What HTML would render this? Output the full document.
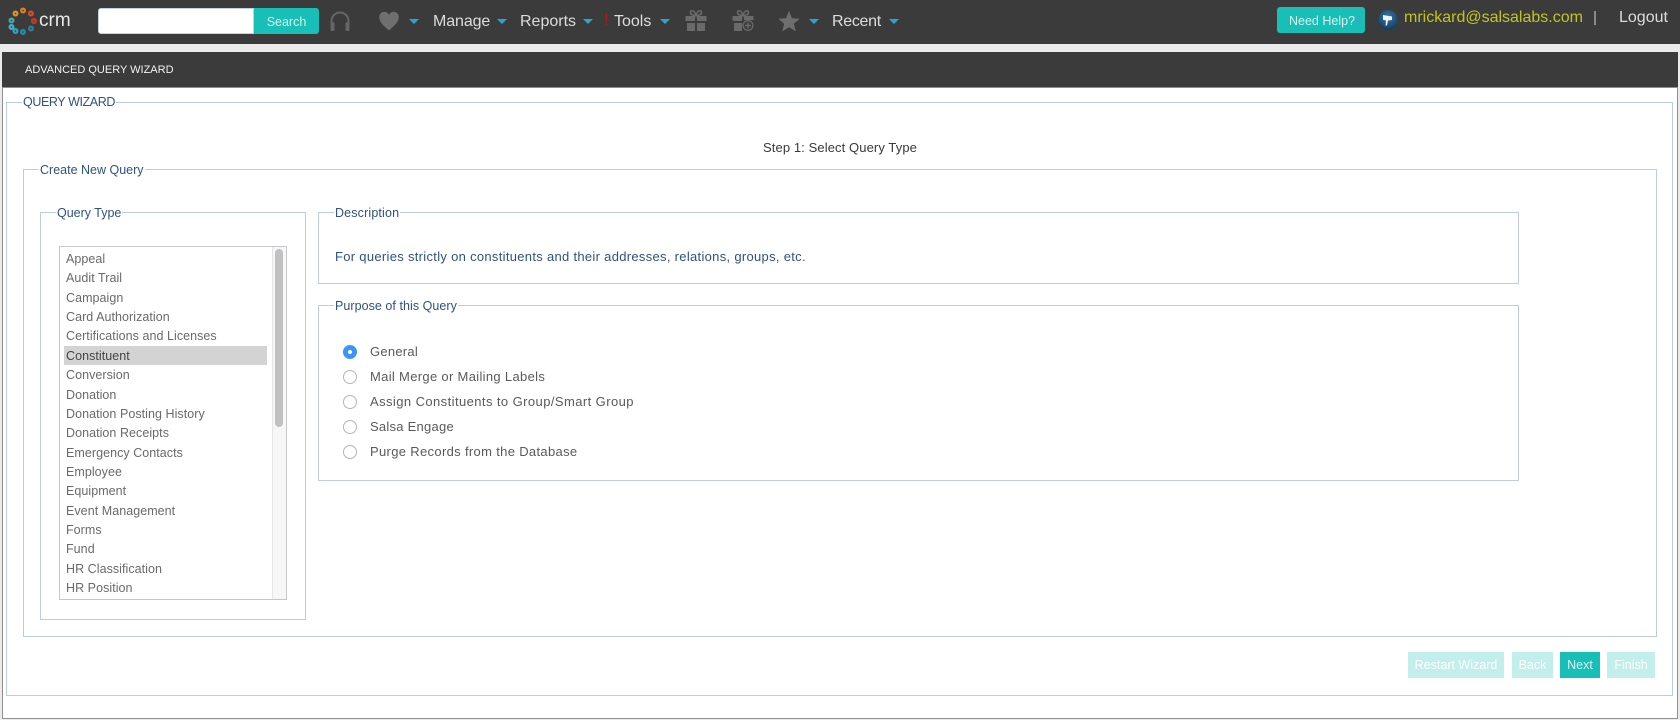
<!DOCTYPE html>
<html lang="en">
<head>
<meta charset="utf-8">
<title>Advanced Query Wizard</title>
<style>
html,body{margin:0;padding:0;width:1680px;height:720px;overflow:hidden;background:#ebebeb;font-family:"Liberation Sans",sans-serif}
.a{position:absolute;white-space:nowrap}
.t{position:absolute;white-space:nowrap;line-height:20px;height:20px}
.nav{color:#dcdcdc;font-size:16px}
.box{position:absolute;border:1px solid #bccde0;box-sizing:border-box}
.leg{color:#2f5283;font-size:12.5px;background:#fff;padding:0 1px}
.it{position:absolute;left:66px;color:#6a6a6a;font-size:12.5px;line-height:20px;white-space:nowrap;letter-spacing:.05px}
.lab{position:absolute;left:370px;color:#5a5a5a;font-size:13px;line-height:20px;white-space:nowrap;letter-spacing:.25px}
.rad{position:absolute;left:343px;width:12px;height:12px;border:1px solid #b5b5b5;border-radius:50%;background:#fff}
.car{position:absolute;top:19px;width:0;height:0;border-left:5px solid transparent;border-right:5px solid transparent;border-top:5px solid #2aa5cf}
.btn{position:absolute;top:652px;height:26px;line-height:26px;text-align:center;color:#fff;font-size:12.5px;background:#c2eeeb}
</style>
</head>
<body>
<div class="a" style="left:0;top:0;width:1680px;height:44px;background:#3b3b3b"></div>

<svg class="a" style="left:0;top:0" width="40" height="44" viewBox="0 0 40 44">
<g fill="none" stroke-width="2.200">
<circle cx="15.500" cy="13.500" r="1.900" stroke="#d9952a"/>
<circle cx="23" cy="10.500" r="1.900" stroke="#e0801c"/>
<circle cx="31" cy="13.500" r="1.900" stroke="#cf4f2c"/>
<circle cx="34" cy="21" r="1.900" stroke="#c73a2a"/>
<circle cx="31" cy="28.500" r="1.900" stroke="#2b7f9c"/>
<circle cx="23" cy="32" r="1.900" stroke="#1e8fb0"/>
<circle cx="15.500" cy="31" r="1.900" stroke="#2fa0c0"/>
<circle cx="11.500" cy="27" r="1.900" stroke="#42b0cc"/>
<circle cx="11.500" cy="20.500" r="1.900" stroke="#4aa8a8"/>
</g>
</svg>
<div class="t" style="left:39px;top:11px;color:#e8e8e8;font-size:19px;line-height:20px">crm</div>

<div class="a" style="left:98px;top:8px;width:156px;height:26px;background:#fff;border-radius:3px 0 0 3px;box-sizing:border-box;border:1px solid #c5d2e5"></div>
<div class="a" style="left:254px;top:8px;width:65px;height:26px;background:#17bfb7;border-radius:0 3px 3px 0;color:#d4f3f1;font-size:12.5px;line-height:28px;text-align:center">Search</div>

<svg class="a" style="left:328px;top:9px" width="24" height="24" viewBox="0 0 24 24">
<path d="M3.500 19v-7a8.500 8.500 0 0 1 17 0v7" fill="none" stroke="#666" stroke-width="2"/>
<rect x="2.500" y="13" width="4" height="9" rx="1.500" fill="#666"/>
<rect x="17.500" y="13" width="4" height="9" rx="1.500" fill="#666"/>
</svg>
<svg class="a" style="left:379px;top:11px" width="20" height="20" viewBox="0 0 20 20">
<path d="M10 19.500C7 16.500.2 12 .2 6.300.2 3 2.600.8 5.300.8 7.300.8 9 1.900 10 3.700 11 1.900 12.700.8 14.700.8c2.700 0 5.100 2.200 5.100 5.500C19.800 12 13 16.500 10 19.500z" fill="#6f6f6f"/>
</svg>
<div class="car" style="left:409px"></div>

<div class="t nav" style="left:433px;top:12px;letter-spacing:-.1px">Manage</div>
<div class="car" style="left:497px"></div>
<div class="t nav" style="left:520px;top:12px">Reports</div>
<div class="car" style="left:583px"></div>
<div class="t" style="left:604px;top:10px;color:#b01818;font-size:17px">!</div>
<div class="t nav" style="left:614px;top:12px">Tools</div>
<div class="car" style="left:660px"></div>

<svg class="a" style="left:685px;top:9px" width="22" height="24" viewBox="0 0 22 24">
<path d="M11 6.500C8 6.500 5 5.500 5.500 3 6 .8 9.500 1 11 6.500 12.500 1 16 .8 16.500 3 17 5.500 14 6.500 11 6.500z" fill="none" stroke="#6a6a6a" stroke-width="1.500"/>
<rect x="0.500" y="7" width="9.500" height="5" fill="#6a6a6a"/>
<rect x="12" y="7" width="9.500" height="5" fill="#6a6a6a"/>
<rect x="2" y="14" width="8" height="8" fill="#6a6a6a"/>
<rect x="12" y="14" width="8" height="8" fill="#6a6a6a"/>
</svg>
<svg class="a" style="left:732px;top:9px" width="24" height="24" viewBox="0 0 24 24">
<path d="M11 6.500C8 6.500 5 5.500 5.500 3 6 .8 9.500 1 11 6.500 12.500 1 16 .8 16.500 3 17 5.500 14 6.500 11 6.500z" fill="none" stroke="#6a6a6a" stroke-width="1.500"/>
<rect x="0.500" y="7" width="9.500" height="5" fill="#6a6a6a"/>
<rect x="12" y="7" width="9.500" height="4" fill="#6a6a6a"/>
<rect x="2" y="14" width="8" height="8" fill="#6a6a6a"/>
<circle cx="16" cy="16.500" r="5.500" fill="#6a6a6a"/>
<circle cx="16" cy="16.500" r="4.200" fill="#3b3b3b"/>
<path d="M16 13.500v6M13 16.500h6" stroke="#6a6a6a" stroke-width="1.400"/>
</svg>
<svg class="a" style="left:778px;top:10px" width="22" height="22" viewBox="0 0 22 22">
<path d="M11 .8l3 7.400 7.800.5-6 5 2 7.700L11 17.200 4.200 21.400l2-7.700-6-5 7.800-.5z" fill="#6e6e6e"/>
</svg>
<div class="car" style="left:809px"></div>
<div class="t nav" style="left:832px;top:12px;letter-spacing:-.3px">Recent</div>
<div class="car" style="left:889px"></div>

<div class="a" style="left:1277px;top:7px;width:88px;height:26px;background:#17bfb7;border-radius:3px;color:#d4f3f1;font-size:12.500px;line-height:28px;padding-left:12px;box-sizing:border-box">Need Help?</div>
<div class="car" style="left:1354px;top:18px;border-left-width:4px;border-right-width:4px;border-top-color:#3ba7c9"></div>
<svg class="a" style="left:1378px;top:10px" width="20" height="20" viewBox="0 0 20 20">
<defs><radialGradient id="g" cx="50%" cy="35%" r="65%"><stop offset="0" stop-color="#3a79a6"/><stop offset="1" stop-color="#143a5c"/></radialGradient></defs>
<circle cx="10" cy="10" r="10" fill="url(#g)"/>
<path d="M5 5l9 1.500V10l-4 .5-1 5H7.500l.5-5-3-.8z" fill="#eef2f5"/>
</svg>
<div class="t" style="left:1404px;top:8px;color:#c4c41c;font-size:16px">mrickard@salsalabs.com</div>
<div class="a" style="left:1594px;top:11px;width:2px;height:14px;background:#8a8a8a"></div>
<div class="t nav" style="left:1619px;top:8px">Logout</div>

<div class="a" style="left:2px;top:52px;width:1676px;height:667px;background:#fff;border:1px solid #8f8f8f;border-top:0;box-sizing:border-box"></div>
<div class="a" style="left:2px;top:52px;width:1676px;height:36px;background:#3b3b3b;border-bottom:1px solid #8f8f8f;box-sizing:border-box"></div>
<div class="t" style="left:25px;top:60px;color:#f2f2f2;font-size:11px">ADVANCED QUERY WIZARD</div>

<div class="box" style="left:6px;top:102px;width:1667px;height:594px"></div>
<div class="t leg" style="left:22px;top:92px;letter-spacing:-.4px">QUERY WIZARD</div>
<div class="t" style="left:763px;top:138px;color:#3a3a3a;font-size:13px;letter-spacing:.1px">Step 1: Select Query Type</div>

<div class="box" style="left:23px;top:169px;width:1634px;height:468px"></div>
<div class="t leg" style="left:39px;top:160px">Create New Query</div>

<div class="box" style="left:40px;top:212px;width:266px;height:408px"></div>
<div class="t leg" style="left:56px;top:203px">Query Type</div>

<div class="a" style="left:59px;top:246px;width:228px;height:354px;border:1px solid #c4c8cc;box-sizing:border-box;background:#fff"></div>
<div class="a" style="left:272px;top:247px;width:14px;height:352px;background:#f7f7f7;border-left:1px solid #e6e6e6;box-sizing:border-box"></div>
<div class="a" style="left:275px;top:249px;width:8px;height:178px;border-radius:4px;background:#c1c1c1"></div>
<div class="a" style="left:64px;top:346px;width:203px;height:19px;background:#d3d3d3"></div>

<div class="it" style="top:249px">Appeal</div>
<div class="it" style="top:268px">Audit Trail</div>
<div class="it" style="top:288px">Campaign</div>
<div class="it" style="top:307px">Card Authorization</div>
<div class="it" style="top:326px">Certifications and Licenses</div>
<div class="it" style="top:346px;color:#444">Constituent</div>
<div class="it" style="top:365px">Conversion</div>
<div class="it" style="top:385px">Donation</div>
<div class="it" style="top:404px">Donation Posting History</div>
<div class="it" style="top:423px">Donation Receipts</div>
<div class="it" style="top:443px">Emergency Contacts</div>
<div class="it" style="top:462px">Employee</div>
<div class="it" style="top:481px">Equipment</div>
<div class="it" style="top:501px">Event Management</div>
<div class="it" style="top:520px">Forms</div>
<div class="it" style="top:539px">Fund</div>
<div class="it" style="top:559px">HR Classification</div>
<div class="it" style="top:578px">HR Position</div>

<div class="box" style="left:318px;top:212px;width:1201px;height:72px"></div>
<div class="t leg" style="left:334px;top:203px;letter-spacing:.15px">Description</div>
<div class="t" style="left:335px;top:247px;color:#2f5283;font-size:13px;letter-spacing:.3px">For queries strictly on constituents and their addresses, relations, groups, etc.</div>

<div class="box" style="left:318px;top:305px;width:1201px;height:176px"></div>
<div class="t leg" style="left:334px;top:296px;letter-spacing:.05px">Purpose of this Query</div>

<div class="rad" style="top:345px;background:#3b95f5;border-color:#3b95f5"></div>
<div class="a" style="left:348px;top:350px;width:4px;height:4px;border-radius:50%;background:#fff"></div>
<div class="lab" style="top:342px">General</div>
<div class="rad" style="top:370px"></div>
<div class="lab" style="top:367px;letter-spacing:.32px">Mail Merge or Mailing Labels</div>
<div class="rad" style="top:395px"></div>
<div class="lab" style="top:392px;letter-spacing:.42px">Assign Constituents to Group/Smart Group</div>
<div class="rad" style="top:420px"></div>
<div class="lab" style="top:417px">Salsa Engage</div>
<div class="rad" style="top:445px"></div>
<div class="lab" style="top:442px;letter-spacing:.33px">Purge Records from the Database</div>

<div class="btn" style="left:1408px;width:96px">Restart Wizard</div>
<div class="btn" style="left:1512px;width:41px">Back</div>
<div class="btn" style="left:1560px;width:40px;background:#17bfb7;color:#d9f5f3">Next</div>
<div class="btn" style="left:1607px;width:48px">Finish</div>
</body>
</html>
